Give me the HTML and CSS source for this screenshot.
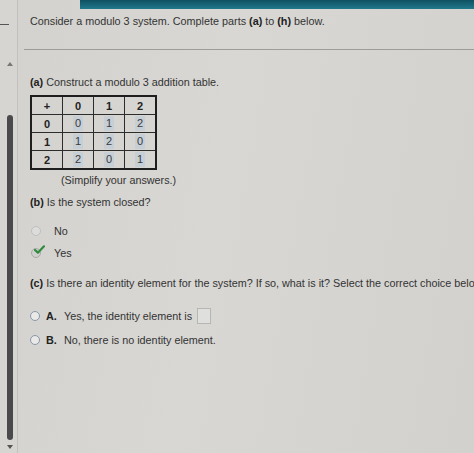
FILE: index.html
```html
<!DOCTYPE html>
<html>
<head>
<meta charset="utf-8">
<link rel="stylesheet" href="styles.css">
</head>
<body>
<div class="page">
  <aside class="side">
    <div class="dash"></div>
    <div class="up"></div>
    <div class="bar"></div>
    <div class="down"></div>
  </aside>
  <main class="main">
    <div class="topbar"></div>
    <p class="title">Consider a modulo 3 system. Complete parts <b>(a)</b> to <b>(h)</b> below.</p>
    <hr class="rule">
    <p class="q qa"><b>(a)</b> Construct a modulo 3 addition table.</p>
    <table class="tbl">
      <tr class="r0"><th>+</th><th>0</th><th>1</th><th>2</th></tr>
      <tr><th>0</th><td><span class="ans">0</span></td><td><span class="ans">1</span></td><td><span class="ans">2</span></td></tr>
      <tr><th>1</th><td><span class="ans">1</span></td><td><span class="ans">2</span></td><td><span class="ans">0</span></td></tr>
      <tr><th>2</th><td><span class="ans">2</span></td><td><span class="ans">0</span></td><td><span class="ans">1</span></td></tr>
    </table>
    <p class="simplify">(Simplify your answers.)</p>
    <p class="q qb"><b>(b)</b> Is the system closed?</p>
    <div class="opts">
      <div class="opt"><span class="radio faint"></span><span>No</span></div>
      <div class="opt"><span class="radio faint checked"><svg class="check" viewBox="0 0 12 10" width="11" height="9"><path d="M1 5.5 L4.2 8.5 L11 1.5" fill="none" stroke="#2f8a3c" stroke-width="2.4" stroke-linecap="round" stroke-linejoin="round"/></svg></span><span>Yes</span></div>
    </div>
    <p class="q qc"><b>(c)</b> Is there an identity element for the system? If so, what is it? Select the correct choice below and fill in any answer boxes.</p>
    <div class="choices">
      <div class="choice"><span class="radio"></span><b class="letter">A.</b><span>Yes, the identity element is</span><span class="box"></span></div>
      <div class="choice"><span class="radio"></span><b class="letter">B.</b><span>No, there is no identity element.</span></div>
    </div>
  </main>
</div>
</body>
</html>
```
FILE: styles.css
```css
html, body {
  margin: 0;
  padding: 0;
  height: 100%;
  overflow: hidden;
}
body {
  background: linear-gradient(100deg, #d3d2ce 0%, #d8d7d3 45%, #d2d1cd 100%);
  font-family: "Liberation Sans", Arial, sans-serif;
  color: #333333;
  font-size: 10.8px;
  line-height: 14px;
}
.page {
  display: flex;
  height: 453px;
}
.side {
  width: 17px;
  flex: none;
  border-right: 1px solid #c2c1bd;
  background: #d6d5d2;
  display: flex;
  flex-direction: column;
}
.dash {
  width: 9px;
  height: 1px;
  background: #555;
  margin-top: 24px;
}
.up {
  width: 0;
  height: 0;
  border-left: 3px solid transparent;
  border-right: 3px solid transparent;
  border-bottom: 4px solid #777;
  margin: 37px 0 0 7px;
}
.bar {
  width: 6px;
  height: 325px;
  background: #4a4a4c;
  border-radius: 3px;
  margin: 49px 0 0 7px;
}
.down {
  width: 0;
  height: 0;
  border-left: 3px solid transparent;
  border-right: 3px solid transparent;
  border-top: 4px solid #555;
  margin: 5px 0 0 7px;
}
.main {
  flex: 1;
  min-width: 0;
  overflow: hidden;
  padding-left: 2px;
}
.topbar {
  height: 9px;
  margin-left: 60px;
  background: linear-gradient(to bottom, #0e5163, #22788a);
}
p { margin: 0; }
b { color: #222; }
.title {
  margin: 5px 0 0 10px;
  white-space: nowrap;
}
.rule {
  margin: 21px 0 0 4px;
  border: 0;
  border-top: 1px solid #9d9c98;
  height: 0;
}
.q {
  margin-left: 10px;
  white-space: nowrap;
}
.qa { margin-top: 25px; }
.tbl {
  margin: 6px 0 0 10px;
  border-collapse: collapse;
  border: 2px solid #1e1e1e;
}
.tbl th, .tbl td {
  width: 30px;
  height: 17px;
  padding: 0;
  border: 1px solid #2c2c2c;
  text-align: center;
  vertical-align: middle;
  font-size: 11px;
  line-height: 14px;
}
.tbl th { font-weight: bold; color: #222; }
.tbl td { color: #3a3a3a; }
.ans {
  display: inline-block;
  width: 10px;
  height: 15px;
  line-height: 15px;
  background: #c6ced6;
}
.simplify {
  margin: 3px 0 0 41px;
}
.qb { margin-top: 8px; }
.opts {
  display: flex;
  flex-direction: column;
  gap: 8px;
  margin: 15px 0 0 11px;
}
.opt {
  display: flex;
  align-items: center;
  gap: 13px;
  height: 14px;
}
.radio {
  width: 8px;
  height: 8px;
  border-radius: 50%;
  border: 1px solid #8a95a8;
  background: #e9e9e8;
  flex: none;
  position: relative;
}
.radio.faint {
  border-color: #bfc0bf;
  background: #dcdcda;
}
.radio.checked {
  border-color: #a9aaa9;
  background: #cfd0ce;
}
.check {
  position: absolute;
  left: 2px;
  top: -4px;
}
.qc { margin-top: 16px; }
.choices {
  display: flex;
  flex-direction: column;
  gap: 10px;
  margin: 19px 0 0 10px;
}
.choice {
  display: flex;
  align-items: center;
  height: 14px;
}
.choice .radio { margin-right: 6px; }
.letter {
  width: 18px;
  color: #222;
}
.box {
  width: 12px;
  height: 14px;
  border: 1px solid #b6b6b4;
  background: #dfdfdd;
  margin-left: 5px;
}
```
